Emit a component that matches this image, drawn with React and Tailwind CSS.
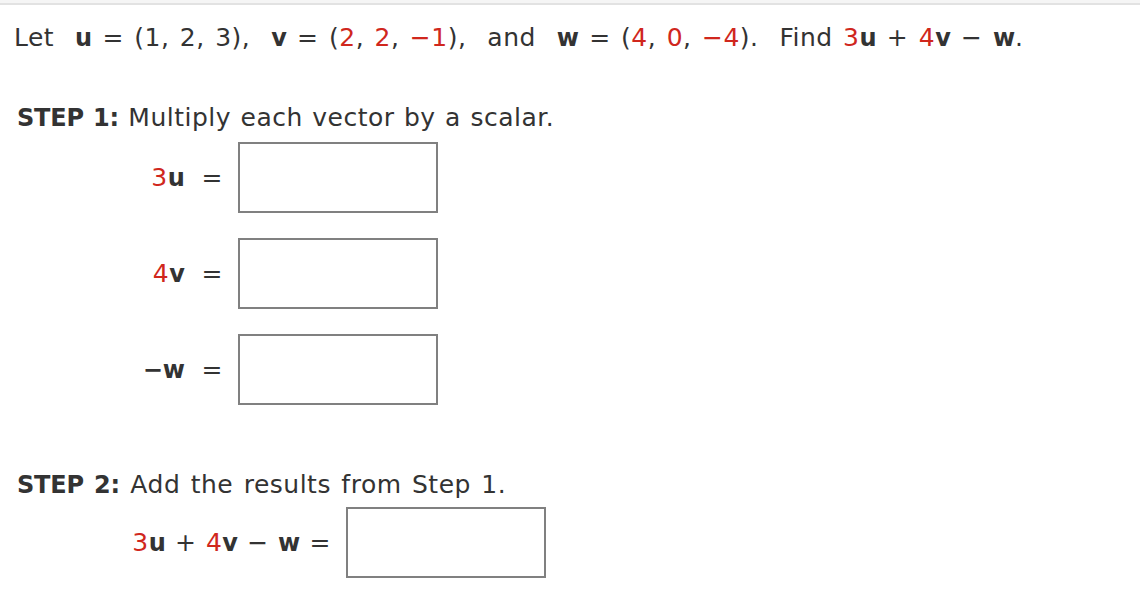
import React from 'react';

const red = 'text-[#d0271d]';

const Bold = ({ children }) => (
  <span className="font-bold text-[24px] tracking-[-0.2px]">{children}</span>
);
const Red = ({ children }) => <span className={red}>{children}</span>;

const AnswerBox = () => (
  <div className="w-[200px] h-[71px] border-2 border-[#808080] bg-white" />
);

const Row = ({ label, labelWidth, children }) => (
  <div className="flex items-center">
    <div className="text-right pr-[15px] whitespace-pre" style={{ width: labelWidth }}>
      {label}
    </div>
    {children}
  </div>
);

const App = () => {
  return (
    <div className="w-[1140px] h-[612px] bg-white text-[#333333] text-[25px] tracking-[0.5px] [word-spacing:2px] font-['DejaVu_Sans','Verdana',sans-serif] overflow-hidden">
      <div className="h-[5px] bg-[#f5f5f5] border-b-2 border-[#e2e2e2]" />

      <p className="pl-[14px] mt-[17px] leading-[32px] whitespace-pre">
        Let  <Bold>u</Bold> = (1, 2, 3),  <Bold>v</Bold> = (<Red>2</Red>, <Red>2</Red>, <Red>−1</Red>),  and  <Bold>w</Bold> = (<Red>4</Red>, <Red>0</Red>, <Red>−4</Red>).  Find <Red>3</Red><Bold>u</Bold> + <Red>4</Red><Bold>v</Bold> − <Bold>w</Bold>.
      </p>

      <p className="pl-[17px] mt-[48px] leading-[32px] [word-spacing:1px]">
        <Bold>STEP 1:</Bold> Multiply each vector by a scalar.
      </p>

      <div className="mt-[8px] flex flex-col gap-[25px] [word-spacing:0px]">
        <Row labelWidth={238} label={<><Red>3</Red><Bold>u</Bold>  =</>}>
          <AnswerBox />
        </Row>
        <Row labelWidth={238} label={<><Red>4</Red><Bold>v</Bold>  =</>}>
          <AnswerBox />
        </Row>
        <Row labelWidth={238} label={<><Bold>−w</Bold>  =</>}>
          <AnswerBox />
        </Row>
      </div>

      <p className="pl-[17px] mt-[64px] leading-[32px]">
        <Bold>STEP 2:</Bold> Add the results from Step 1.
      </p>

      <div className="mt-[6px] [word-spacing:1px]">
        <Row labelWidth={346} label={<><Red>3</Red><Bold>u</Bold> + <Red>4</Red><Bold>v</Bold> − <Bold>w</Bold> =</>}>
          <AnswerBox />
        </Row>
      </div>
    </div>
  );
};

export default App;
